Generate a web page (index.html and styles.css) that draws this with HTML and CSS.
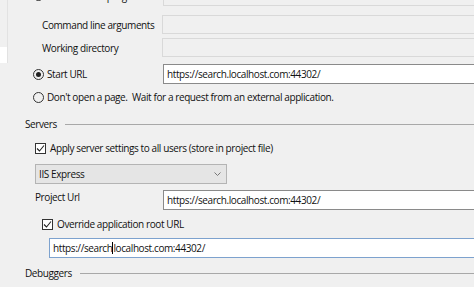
FILE: index.html
```html
<!DOCTYPE html>
<html>
<head>
<meta charset="utf-8">
<link rel="stylesheet" href="styles.css">
</head>
<body>
<div class="page">
  <div class="side"><div class="side-tab"></div></div>
  <div class="main">
    <div class="row top">
      <span class="radio"></span><span class="lbl-w">Start external program</span>
      <div class="box disabled"></div>
    </div>
    <div class="row r1">
      <span class="lbl-i">Command line arguments</span>
      <div class="box disabled"></div>
    </div>
    <div class="row r2">
      <span class="lbl-i">Working directory</span>
      <div class="box disabled"></div>
    </div>
    <div class="row r3">
      <span class="radio on"></span><span class="lbl-w">Start URL</span>
      <div class="box edit">https://search.localhost.com:44302/</div>
    </div>
    <div class="row r4">
      <span class="radio"></span><span>Don't open a page.&nbsp; Wait for a request from an external application.</span>
    </div>
    <div class="group g-servers"><span>Servers</span><div class="rule"></div></div>
    <div class="row r5">
      <span class="check"><svg width="9" height="9" viewBox="0 0 9 9"><path d="M1 4.5 L3.5 7 L8 1.5" fill="none" stroke="#222" stroke-width="1.1"/></svg></span>
      <span>Apply server settings to all users (store in project file)</span>
    </div>
    <div class="row r6">
      <div class="combo"><span>IIS Express</span>
        <svg width="7" height="4" viewBox="0 0 7 4"><path d="M0.5 0.5 L3.5 3.5 L6.5 0.5" fill="none" stroke="#777" stroke-width="1"/></svg>
      </div>
    </div>
    <div class="row r7">
      <span class="lbl-p">Project Url</span>
      <div class="box edit">https://search.localhost.com:44302/</div>
    </div>
    <div class="row r8">
      <span class="check"><svg width="9" height="9" viewBox="0 0 9 9"><path d="M1 4.5 L3.5 7 L8 1.5" fill="none" stroke="#222" stroke-width="1.1"/></svg></span>
      <span>Override application root URL</span>
    </div>
    <div class="row r9">
      <div class="box focus">https://search<span class="caret"></span>localhost.com:44302/</div>
    </div>
    <div class="group g-debug"><span>Debuggers</span><div class="rule"></div></div>
  </div>
</div>
</body>
</html>
```
FILE: styles.css
```css
html, body {
  margin: 0;
  padding: 0;
  background: #f0f0f0;
  overflow: hidden;
}
body {
  font-family: "Open Sans", "Noto Sans", sans-serif;
  font-size: 10px;
  letter-spacing: -0.4px;
  color: #111;
  width: 474px;
  height: 287px;
  white-space: nowrap;
}
.page {
  display: flex;
  height: 287px;
}
.side {
  width: 8px;
  flex: none;
  height: 63px;
  border-right: 1px solid #e2e2e2;
  box-sizing: border-box;
  padding-top: 47px;
}
.side-tab {
  height: 16px;
  background: #ffffff;
}
.main {
  flex: 1;
  min-width: 0;
}
.row {
  display: flex;
  align-items: center;
}
.top {
  height: 6px;
  overflow: hidden;
  align-items: flex-end;
  padding-left: 25px;
}
.top .radio { margin-bottom: 5px; }
.top .lbl-w { margin-bottom: 3px; line-height: 14px; }
.r1 { margin-top: 9px; padding-left: 34px; }
.r2 { margin-top: 4px; padding-left: 34px; }
.r3 { margin-top: 7px; padding-left: 25px; }
.r4 { margin-top: 5px; padding-left: 25px; height: 16px; }
.r5 { margin-top: 8px; padding-left: 27px; height: 16px; }
.r6 { margin-top: 8px; padding-left: 27px; }
.r7 { margin-top: 6px; padding-left: 27px; align-items: flex-start; }
.r8 { margin-top: 6px; padding-left: 34px; height: 16px; }
.r9 { margin-top: 6px; padding-left: 41px; }
.lbl-i { width: 120px; flex: none; }
.lbl-w { width: 116px; flex: none; }
.lbl-p { width: 128px; flex: none; line-height: 14px; }
.radio {
  width: 11px;
  height: 11px;
  box-sizing: border-box;
  border: 1px solid #333;
  border-radius: 50%;
  margin-right: 3px;
  flex: none;
  display: flex;
  align-items: center;
  justify-content: center;
}
.radio.on::after {
  content: "";
  width: 5px;
  height: 5px;
  border-radius: 50%;
  background: #222;
}
.check {
  width: 11px;
  height: 11px;
  box-sizing: border-box;
  border: 1px solid #333;
  background: #fff;
  margin-right: 4px;
  flex: none;
  display: flex;
  align-items: center;
  justify-content: center;
}
.box {
  flex: 1;
  height: 19px;
  box-sizing: border-box;
  display: flex;
  align-items: center;
  padding-left: 3px;
  white-space: nowrap;
}
.box.disabled {
  border: 1px solid #d9d9d9;
  border-right: none;
  background: #f0f0f0;
}
.box.edit {
  height: 20px;
  border: 1px solid #8a8a8a;
  border-right: none;
  background: #fff;
}
.box.focus {
  height: 20px;
  border: 1px solid #7da2ce;
  border-right: none;
  background: #fff;
}
.caret {
  display: inline-block;
  width: 1px;
  height: 12px;
  background: #000;
}
.combo {
  width: 192px;
  height: 20px;
  box-sizing: border-box;
  border: 1px solid #b4b4b4;
  background: #e5e5e5;
  display: flex;
  align-items: center;
  justify-content: space-between;
  padding: 0 5px 0 3px;
}
.group {
  display: flex;
  align-items: center;
  padding-left: 17px;
  height: 16px;
}
.group .rule {
  flex: 1;
  height: 1px;
  background: #a8a8a8;
  margin-left: 8px;
}
.g-servers { margin-top: 11px; }
.g-debug { margin-top: 7px; }
```
